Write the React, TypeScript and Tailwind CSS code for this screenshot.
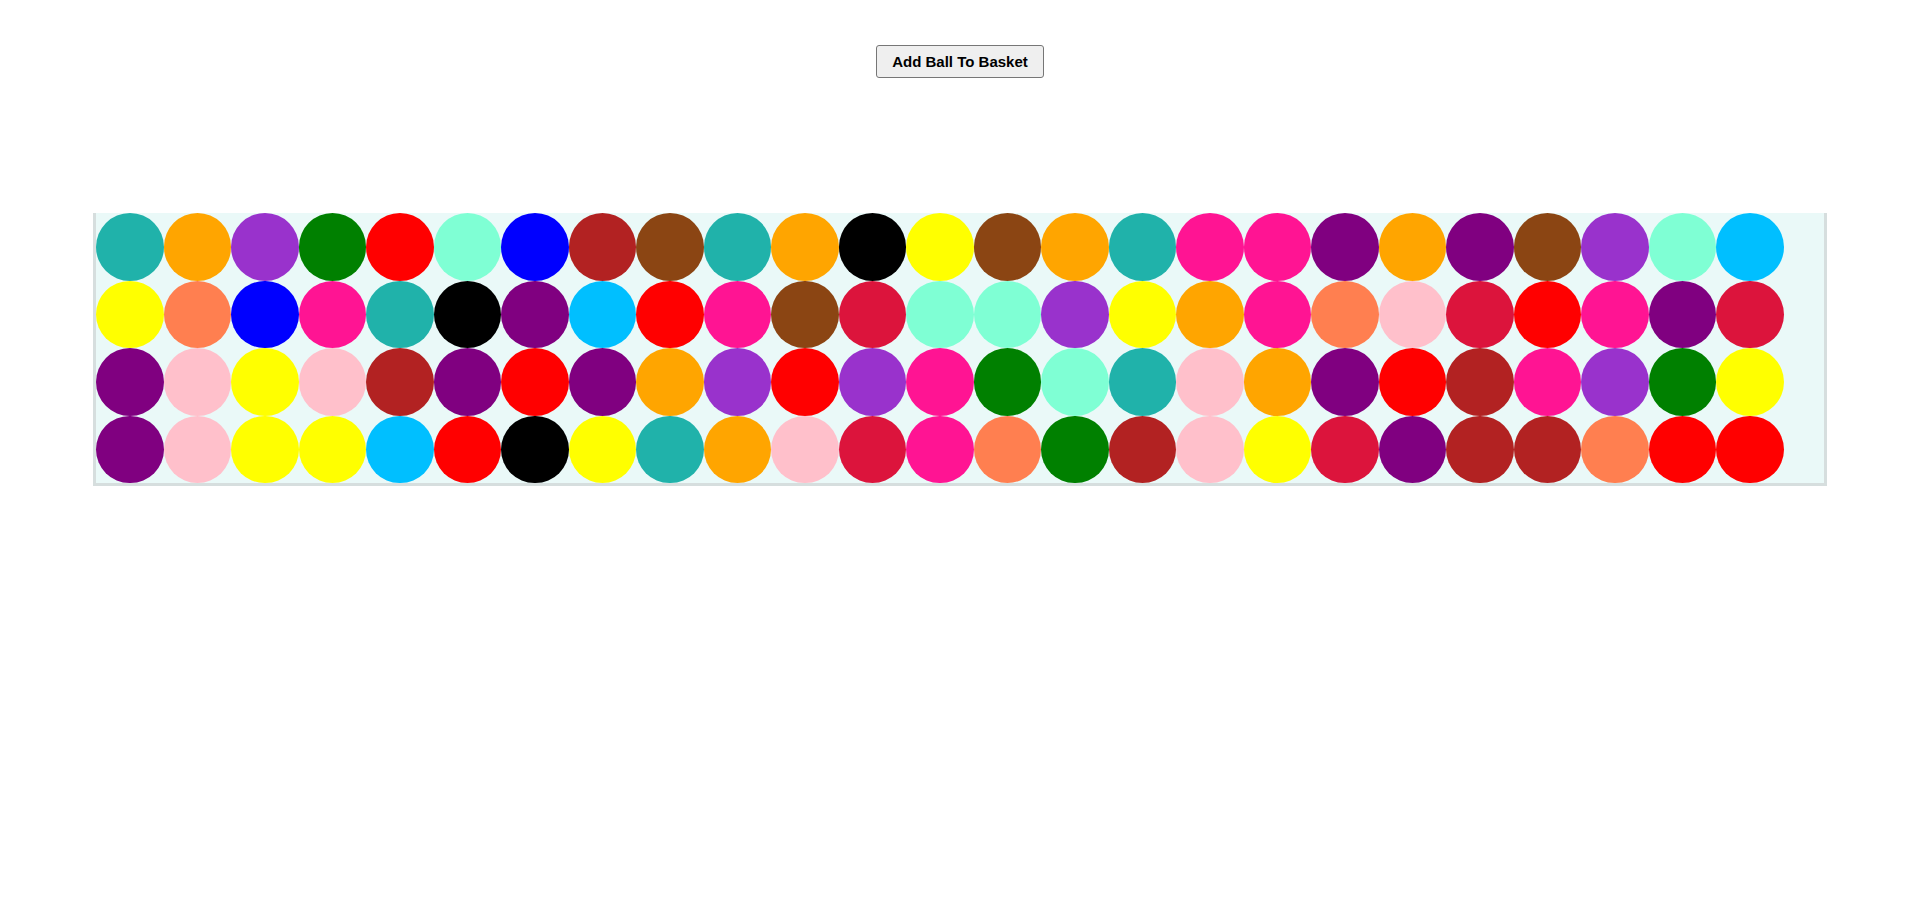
import React from "react";

const rows: string[][] = [
  ["#20b2aa","#ffa500","#9932cc","#008000","#ff0000","#7fffd4","#0000ff","#b22222","#8b4513","#20b2aa","#ffa500","#000000","#ffff00","#8b4513","#ffa500","#20b2aa","#ff1493","#ff1493","#800080","#ffa500","#800080","#8b4513","#9932cc","#7fffd4","#00bfff"],
  ["#ffff00","#ff7f50","#0000ff","#ff1493","#20b2aa","#000000","#800080","#00bfff","#ff0000","#ff1493","#8b4513","#dc143c","#7fffd4","#7fffd4","#9932cc","#ffff00","#ffa500","#ff1493","#ff7f50","#ffc0cb","#dc143c","#ff0000","#ff1493","#800080","#dc143c"],
  ["#800080","#ffc0cb","#ffff00","#ffc0cb","#b22222","#800080","#ff0000","#800080","#ffa500","#9932cc","#ff0000","#9932cc","#ff1493","#008000","#7fffd4","#20b2aa","#ffc0cb","#ffa500","#800080","#ff0000","#b22222","#ff1493","#9932cc","#008000","#ffff00"],
  ["#800080","#ffc0cb","#ffff00","#ffff00","#00bfff","#ff0000","#000000","#ffff00","#20b2aa","#ffa500","#ffc0cb","#dc143c","#ff1493","#ff7f50","#008000","#b22222","#ffc0cb","#ffff00","#dc143c","#800080","#b22222","#b22222","#ff7f50","#ff0000","#ff0000"],
];

const balls = rows.flat();

export default function App() {
  return (
    <div className="w-full min-h-[902px] bg-white" style={{ fontFamily: '"Liberation Sans", Arial, sans-serif' }}>
      <div className="flex justify-center pt-[45px]">
        <button className="h-[33px] px-[15px] bg-[#efefef] border border-[#767676] rounded-[3px] text-[15px] font-bold text-black leading-none">
          Add Ball To Basket
        </button>
      </div>
      <div className="mt-[135px] mx-auto w-[1734px] border-x-[3px] border-b-[3px] border-[#d6dede] bg-[#eaf9f8] flex flex-wrap content-start">
        {balls.map((c, i) => (
          <div key={i} className="w-[67.5px] h-[67.5px] rounded-full shrink-0" style={{ backgroundColor: c }} />
        ))}
      </div>
    </div>
  );
}
